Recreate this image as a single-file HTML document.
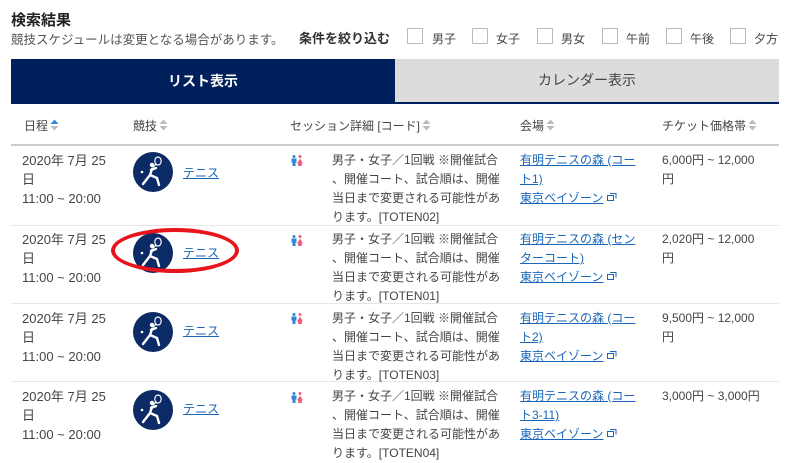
<!DOCTYPE html>
<html><head><meta charset="utf-8"><style>
*{margin:0;padding:0;box-sizing:border-box}
body{width:800px;height:458px;overflow:hidden;background:#fff;font-family:"Liberation Sans","Noto Sans CJK JP",sans-serif;color:#444;font-size:13px;position:relative}
.a{position:absolute;white-space:nowrap}
.t{line-height:19px}
.j{font-size:12px}
a{color:#1a66b8;text-decoration:underline}
.cb{position:absolute;top:28px;width:16px;height:16px;border:1px solid #bbb;background:#fff}
.sep{position:absolute;left:11px;width:768px;height:1px;background:#e6e6e6}
.sort{display:inline-block;width:9px;height:12px;vertical-align:-1px;margin-left:2px}
.ic{position:absolute;left:133px;width:40px;height:40px;border-radius:50%;background:#0b2a66}
</style></head><body>
<div class="a" style="left:11px;top:9px;font-size:15px;font-weight:bold;color:#222">検索結果</div>
<div class="a" style="left:11px;top:29px;font-size:12.5px;color:#555">競技スケジュールは変更となる場合があります。</div>
<div class="a" style="left:299px;top:28px;font-size:13px;font-weight:bold;color:#333">条件を絞り込む</div>
<div class="cb" style="left:407px"></div><div class="a j" style="left:432px;top:30px">男子</div>
<div class="cb" style="left:472px"></div><div class="a j" style="left:496px;top:30px">女子</div>
<div class="cb" style="left:537px"></div><div class="a j" style="left:561px;top:30px">男女</div>
<div class="cb" style="left:602px"></div><div class="a j" style="left:626px;top:30px">午前</div>
<div class="cb" style="left:666px"></div><div class="a j" style="left:690px;top:30px">午後</div>
<div class="cb" style="left:730px"></div><div class="a j" style="left:754px;top:30px">夕方</div>

<div class="a" style="left:11px;top:59px;width:384px;height:45px;background:#00205b;color:#fff;font-weight:bold;font-size:14px;text-align:center;line-height:45px">リスト表示</div>
<div class="a" style="left:395px;top:59px;width:384px;height:45px;background:#dcdcdc;color:#444;font-size:14px;text-align:center;line-height:43px;border-bottom:2px solid #00205b">カレンダー表示</div>

<svg width="0" height="0" style="position:absolute"><defs>
<g id="s"><path d="M0.5 5 L4.5 0.5 L8.5 5Z" fill="#bbb"/><path d="M0.5 7 L4.5 11.5 L8.5 7Z" fill="#bbb"/></g>
<g id="sb"><path d="M0.5 5 L4.5 0.5 L8.5 5Z" fill="#2f86d6"/><path d="M0.5 7 L4.5 11.5 L8.5 7Z" fill="#bbb"/></g>
</defs></svg>
<div class="a j" style="left:24px;top:117px">日程<svg class="sort"><use href="#sb"/></svg></div>
<div class="a j" style="left:133px;top:117px">競技<svg class="sort"><use href="#s"/></svg></div>
<div class="a j" style="left:290px;top:117px">セッション詳細 [コード]<svg class="sort"><use href="#s"/></svg></div>
<div class="a j" style="left:520px;top:117px">会場<svg class="sort"><use href="#s"/></svg></div>
<div class="a j" style="left:662px;top:117px">チケット価格帯<svg class="sort"><use href="#s"/></svg></div>
<div class="a" style="left:11px;top:144px;width:768px;height:2px;background:#ccc"></div>

<div class="sep" style="top:225px"></div>
<div class="sep" style="top:303px"></div>
<div class="sep" style="top:381px"></div>

<svg width="0" height="0" style="position:absolute"><defs>
<g id="pl" fill="none" stroke="#fff" stroke-width="2.4" stroke-linecap="round" stroke-linejoin="round">
<ellipse cx="25" cy="9" rx="3.2" ry="4" stroke-width="1.2"/><path d="M23 12 L20 15" stroke-width="1.4"/>
<circle cx="19" cy="13" r="2.2" fill="#fff" stroke="none"/>
<path d="M19 17 L17 23 L10 32 M17 23 L24 26 L26 33 M18 18 L23 16"/>
<circle cx="9" cy="20" r="1.3" fill="#fff" stroke="none"/></g>
<g id="gd"><circle cx="3" cy="1.5" r="1.5" fill="#2f86d6"/><path d="M0.5 3.5h5v4h-1v3.5h-3v-3.5h-1z" fill="#2f86d6"/><circle cx="9" cy="1.5" r="1.5" fill="#ec5f7a"/><path d="M9 3.5l3 5h-1.2v2.5h-3.6v-2.5h-1.2z" fill="#ec5f7a"/></g>
<g id="ex" fill="none" stroke="#1a66b8" stroke-width="1"><rect x="0.5" y="3.5" width="6" height="5"/><path d="M3 1.5h6v5"/></g>
</defs></svg>

<div class="a t" style="left:22px;top:151px">2020年 7月 25<br>日<br>11:00 ~ 20:00</div>
<div class="ic" style="top:152px"><svg width="40" height="40"><use href="#pl"/></svg></div>
<div class="a j" style="left:183px;top:164px"><a>テニス</a></div>
<svg class="a" style="left:291px;top:155px" width="13" height="11"><use href="#gd"/></svg>
<div class="a t j" style="left:332px;top:151px">男子・女子／1回戦 ※開催試合<br>、開催コート、試合順は、開催<br>当日まで変更される可能性があ<br>ります。[TOTEN02]</div>
<div class="a t j" style="left:520px;top:151px"><a>有明テニスの森 (コー</a><br><a>ト1)</a><br><a>東京ベイゾーン</a> <svg width="10" height="10"><use href="#ex"/></svg></div>
<div class="a t j" style="left:662px;top:151px">6,000円 ~ 12,000<br>円</div>

<div class="a t" style="left:22px;top:230px">2020年 7月 25<br>日<br>11:00 ~ 20:00</div>
<div class="ic" style="top:233px"><svg width="40" height="40"><use href="#pl"/></svg></div>
<div class="a j" style="left:183px;top:244px"><a>テニス</a></div>
<svg class="a" style="left:291px;top:235px" width="13" height="11"><use href="#gd"/></svg>
<div class="a t j" style="left:332px;top:230px">男子・女子／1回戦 ※開催試合<br>、開催コート、試合順は、開催<br>当日まで変更される可能性があ<br>ります。[TOTEN01]</div>
<div class="a t j" style="left:520px;top:230px"><a>有明テニスの森 (セン</a><br><a>ターコート)</a><br><a>東京ベイゾーン</a> <svg width="10" height="10"><use href="#ex"/></svg></div>
<div class="a t j" style="left:662px;top:230px">2,020円 ~ 12,000<br>円</div>
<div class="a" style="left:111px;top:228px;width:128px;height:45px;border:4px solid #e8131b;border-radius:50%"></div>

<div class="a t" style="left:22px;top:309px">2020年 7月 25<br>日<br>11:00 ~ 20:00</div>
<div class="ic" style="top:312px"><svg width="40" height="40"><use href="#pl"/></svg></div>
<div class="a j" style="left:183px;top:322px"><a>テニス</a></div>
<svg class="a" style="left:291px;top:313px" width="13" height="11"><use href="#gd"/></svg>
<div class="a t j" style="left:332px;top:309px">男子・女子／1回戦 ※開催試合<br>、開催コート、試合順は、開催<br>当日まで変更される可能性があ<br>ります。[TOTEN03]</div>
<div class="a t j" style="left:520px;top:309px"><a>有明テニスの森 (コー</a><br><a>ト2)</a><br><a>東京ベイゾーン</a> <svg width="10" height="10"><use href="#ex"/></svg></div>
<div class="a t j" style="left:662px;top:309px">9,500円 ~ 12,000<br>円</div>

<div class="a t" style="left:22px;top:387px">2020年 7月 25<br>日<br>11:00 ~ 20:00</div>
<div class="ic" style="top:390px"><svg width="40" height="40"><use href="#pl"/></svg></div>
<div class="a j" style="left:183px;top:400px"><a>テニス</a></div>
<svg class="a" style="left:291px;top:392px" width="13" height="11"><use href="#gd"/></svg>
<div class="a t j" style="left:332px;top:387px">男子・女子／1回戦 ※開催試合<br>、開催コート、試合順は、開催<br>当日まで変更される可能性があ<br>ります。[TOTEN04]</div>
<div class="a t j" style="left:520px;top:387px"><a>有明テニスの森 (コー</a><br><a>ト3-11)</a><br><a>東京ベイゾーン</a> <svg width="10" height="10"><use href="#ex"/></svg></div>
<div class="a t j" style="left:662px;top:387px">3,000円 ~ 3,000円</div>
</body></html>
